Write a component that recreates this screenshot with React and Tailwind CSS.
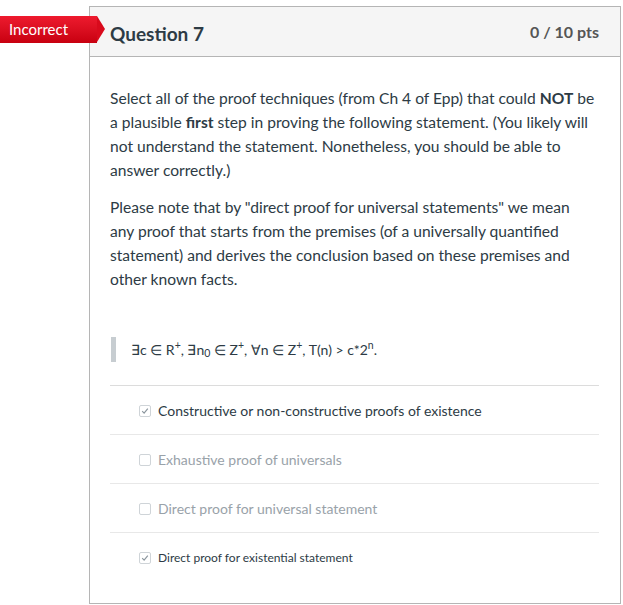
import React from 'react';

const answers = [
  { text: 'Constructive or non-constructive proofs of existence', checked: true, size: 'text-[14px]' },
  { text: 'Exhaustive proof of universals', checked: false, size: 'text-[14px]' },
  { text: 'Direct proof for universal statement', checked: false, size: 'text-[14px]' },
  { text: 'Direct proof for existential statement', checked: true, size: 'text-[12px]' },
];

const Checkbox = ({ checked }) => (
  <span className="w-[12px] h-[12px] border border-[#cfd4d8] rounded-[2px] bg-white flex items-center justify-center shrink-0">
    {checked && (
      <svg width="8" height="8" viewBox="0 0 8 8">
        <path d="M1.2 4.2 L3.1 6.1 L6.8 1.6" fill="none" stroke="#8b969e" strokeWidth="1.2" />
      </svg>
    )}
  </span>
);

const App = () => {
  return (
    <div className="relative w-[623px] h-[605px] bg-white font-['Lato',sans-serif] text-[#2d3b45]">
      <div className="absolute left-0 top-[16px] h-[27px] flex items-stretch">
        <div className="w-[97px] bg-gradient-to-b from-[#ee1a2e] to-[#c8000f] text-white text-[15px] flex items-center pl-[9px]">
          Incorrect
        </div>
        <div className="w-0 h-0 border-y-[13.5px] border-y-transparent border-l-[8px] border-l-[#d90a1c]"></div>
      </div>

      <div className="ml-[89px] pt-[6px] w-[532px]">
        <div className="border border-[#b5b5b5] h-[598px] flex flex-col">
          <div className="h-[50px] bg-[#f5f5f5] border-b border-[#b5b5b5] flex items-center justify-between pl-[20px] pr-[21px] shrink-0">
            <h2 className="text-[19px] font-bold text-[#2d3b45] pt-[5px]">Question 7</h2>
            <span className="text-[16px] font-bold text-[#555]">0 / 10 pts</span>
          </div>

          <div className="pl-[20px] pr-[20px] pt-[29px]">
            <div className="text-[15.6px] leading-[24px] -mr-[4px]">
              <p>
                Select all of the proof techniques (from Ch 4 of Epp) that could <strong>NOT</strong> be a plausible <strong>first</strong> step in proving the following statement. (You likely will not understand the statement. Nonetheless, you should be able to answer correctly.)
              </p>
              <p className="mt-[13px] pr-[12px]">
                Please note that by "direct proof for universal statements" we mean any proof that starts from the premises (of a universally quantified statement) and derives the conclusion based on these premises and other known facts.
              </p>
            </div>

            <div className="mt-[46px] flex items-center h-[25px]">
              <span className="w-[5px] h-[25px] bg-[#c7cdd1] shrink-0 ml-px"></span>
              <span className="ml-[15px] text-[14px] leading-[20px]">
                ∃c ∈ R<sup>+</sup>, ∃n<sub>0</sub> ∈ Z<sup>+</sup>, ∀n ∈ Z<sup>+</sup>, T(n) &gt; c*2<sup>n</sup>.
              </span>
            </div>

            <div className="mt-[23px] mr-[1px]">
              {answers.map((a, i) => (
                <div
                  key={i}
                  className={`h-[49px] flex items-center pl-[29px] pt-[1px] ${i === 0 ? 'border-t border-[#dcdcdc]' : 'border-t border-[#e8e8e8]'}`}
                >
                  <Checkbox checked={a.checked} />
                  <span className={`ml-[7px] ${a.size} ${a.checked ? 'text-[#2d3b45]' : 'text-[#99a2a9]'}`}>
                    {a.text}
                  </span>
                </div>
              ))}
            </div>
          </div>
        </div>
      </div>
    </div>
  );
};

export default App;
